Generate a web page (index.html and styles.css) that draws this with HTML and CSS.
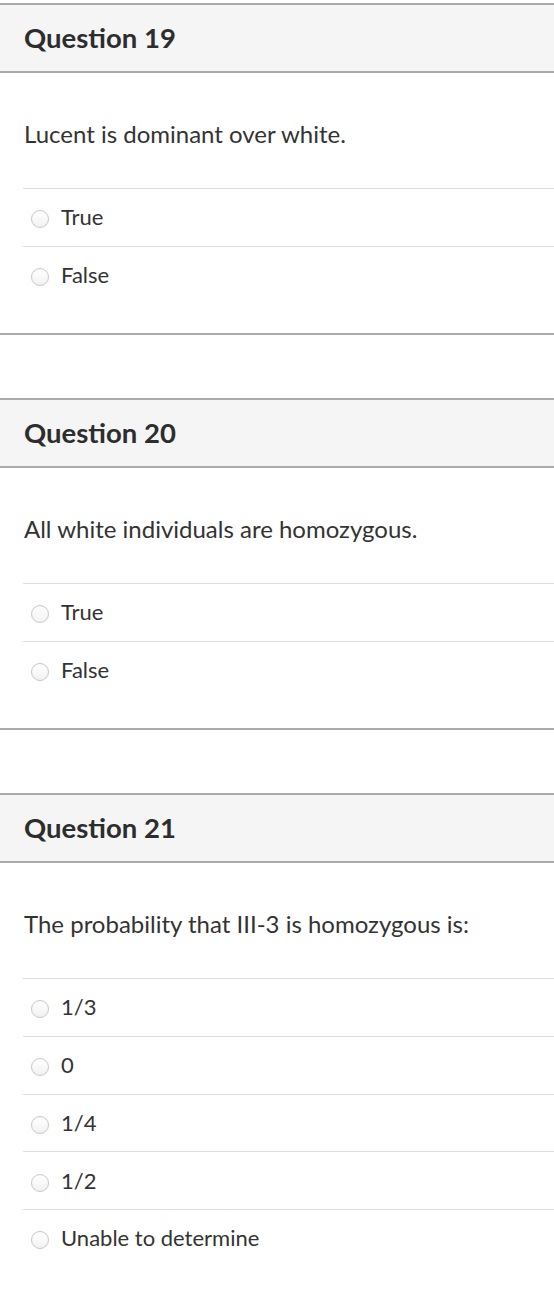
FILE: index.html
```html
<!DOCTYPE html>
<html>
<head>
<meta charset="utf-8">
<link rel="stylesheet" href="styles.css">
</head>
<body>
<div class="quiz">
  <section class="question">
    <div class="q-header"><h2>Question 19</h2></div>
    <div class="q-body">
      <p class="q-text">Lucent is dominant over white.</p>
      <ul class="answers">
        <li class="answer"><span class="radio"></span><span class="label">True</span></li>
        <li class="answer"><span class="radio"></span><span class="label">False</span></li>
      </ul>
    </div>
  </section>
  <section class="question">
    <div class="q-header"><h2>Question 20</h2></div>
    <div class="q-body">
      <p class="q-text">All white individuals are homozygous.</p>
      <ul class="answers">
        <li class="answer"><span class="radio"></span><span class="label">True</span></li>
        <li class="answer"><span class="radio"></span><span class="label">False</span></li>
      </ul>
    </div>
  </section>
  <section class="question last">
    <div class="q-header"><h2>Question 21</h2></div>
    <div class="q-body">
      <p class="q-text">The probability that III-3 is homozygous is:</p>
      <ul class="answers">
        <li class="answer"><span class="radio"></span><span class="label">1/3</span></li>
        <li class="answer"><span class="radio"></span><span class="label">0</span></li>
        <li class="answer"><span class="radio"></span><span class="label">1/4</span></li>
        <li class="answer"><span class="radio"></span><span class="label">1/2</span></li>
        <li class="answer"><span class="radio"></span><span class="label">Unable to determine</span></li>
      </ul>
    </div>
  </section>
</div>
</body>
</html>
```

FILE: styles.css
```css
html, body {
  margin: 0;
  padding: 0;
  background: #fff;
}
body {
  font-family: Lato, "Open Sans", sans-serif;
  color: #333333;
  overflow: hidden;
}
.quiz {
  padding-top: 3px;
}
.question {
  border-top: 2px solid #aaaaaa;
  border-bottom: 2px solid #aaaaaa;
  margin-bottom: 63.5px;
}
.question.last {
  border-bottom: none;
}
.q-header {
  height: 66px;
  background: #f5f5f5;
  border-bottom: 2px solid #aaaaaa;
  display: flex;
  align-items: center;
  padding-left: 24px;
}
.q-header h2 {
  margin: 0;
  font-size: 27.5px;
  font-weight: 700;
  color: #2d2d2d;
  line-height: 1;
}
.q-body {
  padding-bottom: 29px;
}
.q-text {
  margin: 0;
  padding: 46px 0 39px 24px;
  font-size: 24px;
  line-height: 30px;
}
.answers {
  list-style: none;
  margin: 0 0 0 23px;
  padding: 0;
}
.answer {
  border-top: 1px solid #dddddd;
  height: 56.75px;
  display: flex;
  align-items: center;
  padding-left: 8px;
}
.radio {
  width: 16px;
  height: 16px;
  border: 1px solid #c8c8c8;
  border-radius: 50%;
  background: linear-gradient(#ffffff, #f2f2f2);
  box-sizing: content-box;
  flex: none;
  margin-right: 12px;
  margin-top: 4px;
}
.label {
  font-size: 22px;
  line-height: 24px;
}
```
